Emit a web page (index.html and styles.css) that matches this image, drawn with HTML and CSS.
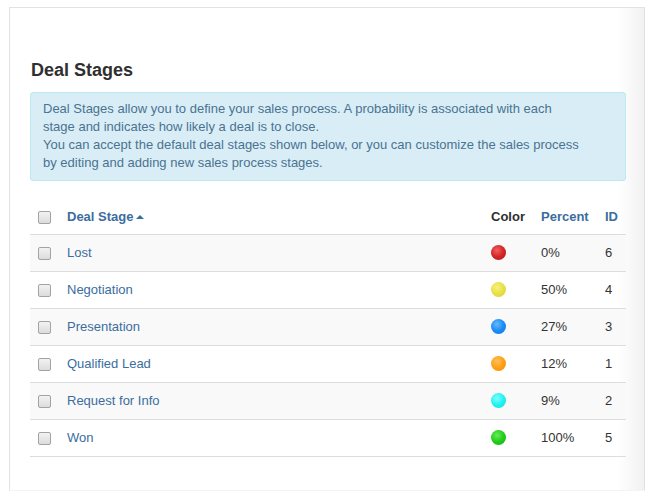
FILE: index.html
```html
<!DOCTYPE html>
<html>
<head>
    <meta charset="utf-8">
    <title>Deal Stages</title>
    <link rel="stylesheet" href="styles.css">
</head>
<body>
<div class='panel'>
    <h3 class='title'>Deal Stages</h3>

    <div class='info'>
        Deal Stages allow you to define your sales process. A probability is associated with each<br>
        stage and indicates how likely a deal is to close.<br>
        You can accept the default deal stages shown below, or you can customize the sales process<br>
        by editing and adding new sales process stages.
    </div>

    <table class='stages'>
        <colgroup>
            <col class='c-check'>
            <col class='c-name'>
            <col class='c-color'>
            <col class='c-pct'>
            <col class='c-id'>
        </colgroup>
        <thead>
            <tr>
                <th><span class='check'></span></th>
                <th><a href='#'>Deal Stage</a><svg class='caret' width='8' height='5' viewBox='0 0 8 5'><path d='M0 5 L4 1 L8 5 Z' fill='#3b6d9e'/></svg></th>
                <th class='plain'>Color</th>
                <th><a href='#'>Percent</a></th>
                <th><a href='#'>ID</a></th>
            </tr>
        </thead>
        <tbody>
            <tr><td><span class='check'></span></td><td><a href='#'>Lost</a></td><td><span class='dot red'></span></td><td>0%</td><td>6</td></tr>
            <tr><td><span class='check'></span></td><td><a href='#'>Negotiation</a></td><td><span class='dot yellow'></span></td><td>50%</td><td>4</td></tr>
            <tr><td><span class='check'></span></td><td><a href='#'>Presentation</a></td><td><span class='dot blue'></span></td><td>27%</td><td>3</td></tr>
            <tr><td><span class='check'></span></td><td><a href='#'>Qualified Lead</a></td><td><span class='dot orange'></span></td><td>12%</td><td>1</td></tr>
            <tr><td><span class='check'></span></td><td><a href='#'>Request for Info</a></td><td><span class='dot cyan'></span></td><td>9%</td><td>2</td></tr>
            <tr><td><span class='check'></span></td><td><a href='#'>Won</a></td><td><span class='dot green'></span></td><td>100%</td><td>5</td></tr>
        </tbody>
    </table>
</div>
</body>
</html>
```

FILE: styles.css
```css
body
{
    margin:0;
    background-color:#ffffff;
    font-family:"Liberation Sans", Arial, sans-serif;
    font-size:13px;
    color:#333333;
}

.panel
{
    margin:7px 3px 0 9px;
    height:484px;
    padding:51px 18px 0 20px;
    box-sizing:border-box;
    border:1px solid #e2e2e2;
    border-bottom-color:#f4f4f4;
    background:linear-gradient(to right, #ffffff calc(100% - 26px), #f1f1f1);
}

.title
{
    margin:0 0 11px 1px;
    font-size:18px;
    line-height:22px;
    font-weight:bold;
    color:#2f2f2f;
}

.info
{
    padding:7px 12px 8px 12px;
    line-height:18px;
    background-color:#d9edf7;
    border:1px solid #bce8f1;
    border-radius:3px;
    color:#4a7390;
    margin-bottom:18px;
}

table.stages
{
    width:100%;
    table-layout:fixed;
    border-collapse:collapse;
}

col.c-check { width:29px; }
col.c-color { width:50px; }
col.c-pct   { width:64px; }
col.c-id    { width:29px; }

table.stages th,
table.stages td
{
    text-align:left;
    padding:0 0 0 8px;
    line-height:16px;
    vertical-align:middle;
    white-space:nowrap;
    border-bottom:1px solid #dddddd;
}

table.stages th
{
    height:35px;
    font-weight:bold;
}

table.stages td
{
    height:36px;
}

table.stages tbody tr:nth-child(odd) td
{
    background-color:#f9f9f9;
}

table.stages a
{
    color:#3b6d9e;
    text-decoration:none;
}

table.stages th.plain
{
    color:#2f2f2f;
}

.caret
{
    margin-left:3px;
    vertical-align:2px;
}

.check
{
    display:inline-block;
    width:11px;
    height:11px;
    border:1px solid #a3a3a3;
    border-radius:2px;
    background:linear-gradient(#f2f2f2, #dcdcdc);
    vertical-align:middle;
}

.dot
{
    display:inline-block;
    width:15px;
    height:15px;
    border-radius:50%;
    vertical-align:-2px;
}

.dot.red    { background:radial-gradient(circle at 40% 35%, #f06060, #d42626 50%, #b01818); }
.dot.yellow { background:radial-gradient(circle at 40% 35%, #f6f080, #e8e046 50%, #d8cf30); }
.dot.blue   { background:radial-gradient(circle at 40% 35%, #6ab8ff, #1a8cf5 50%, #0f78e0); }
.dot.orange { background:radial-gradient(circle at 40% 35%, #ffc060, #ffa014 50%, #f08c00); }
.dot.cyan   { background:radial-gradient(circle at 40% 35%, #80ffff, #22f2ee 50%, #10dcdc); }
.dot.green  { background:radial-gradient(circle at 40% 35%, #66ee55, #22cc1c 50%, #14b010); }
```
